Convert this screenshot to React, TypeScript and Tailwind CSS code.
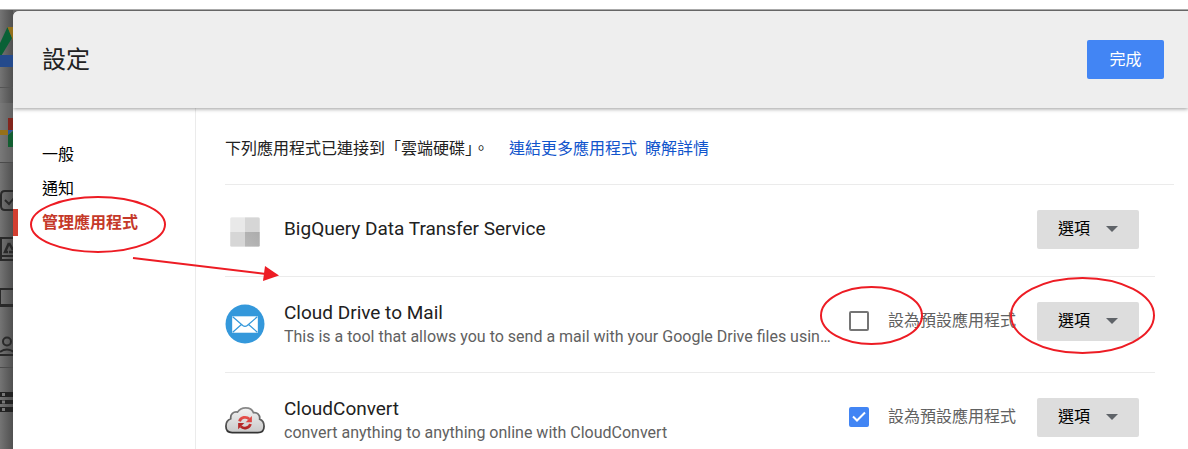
import { useState, type ReactNode } from "react";

const navItems = ["一般", "通知", "管理應用程式"];

function BigQueryIcon() {
  return (
    <svg viewBox="0 0 39 39" className="size-10" aria-hidden="true">
      <defs>
        <clipPath id="tile">
          <rect x="5" y="5" width="29" height="29" rx="1.5" />
        </clipPath>
        <linearGradient id="darkTile" x1="0" y1="1" x2="1" y2="0">
          <stop offset="0" stopColor="#b8b8b8" />
          <stop offset="1" stopColor="#acacac" />
        </linearGradient>
      </defs>
      <g clipPath="url(#tile)">
        <rect x="5" y="5" width="14.5" height="14.5" fill="#e9e9e9" />
        <rect x="19.5" y="5" width="14.5" height="14.5" fill="#d6d6d6" />
        <rect x="5" y="19.5" width="14.5" height="14.5" fill="#d6d6d6" />
        <rect x="19.5" y="19.5" width="14.5" height="14.5" fill="url(#darkTile)" />
      </g>
    </svg>
  );
}

function MailIcon() {
  return (
    <svg viewBox="0 0 39 39" className="size-10" aria-hidden="true">
      <circle cx="19.5" cy="19.5" r="19" fill="#3498db" />
      <rect x="7" y="12" width="25" height="16" fill="#fff" />
      <path d="M7.5 12.5 L17.3 21 Q19.5 22.8 21.7 21 L31.5 12.5 M7.5 27.5 L16 20 M31.5 27.5 L23 20" fill="none" stroke="#3498db" strokeWidth="1.2" />
    </svg>
  );
}

function CloudIcon() {
  return (
    <svg viewBox="0 0 39 39" className="size-10" aria-hidden="true">
      <defs>
        <linearGradient id="cloudFill" x1="0" y1="0" x2="0" y2="1">
          <stop offset="0" stopColor="#f2f2f2" />
          <stop offset="1" stopColor="#c9c9c9" />
        </linearGradient>
        <linearGradient id="cloudEdge" x1="0" y1="0" x2="0" y2="1">
          <stop offset="0" stopColor="#8a8a8a" />
          <stop offset="1" stopColor="#333333" />
        </linearGradient>
        <linearGradient id="arrowRed" gradientUnits="userSpaceOnUse" x1="0" y1="15" x2="0" y2="29">
          <stop offset="0" stopColor="#ee5550" />
          <stop offset="1" stopColor="#a81f1f" />
        </linearGradient>
      </defs>
      <path
        d="M7 31.800 C3 31.800 .9 29.500 .9 25.500 C.9 21.700 3 19.300 5.600 18.300 C5 14 8.300 11 12.200 11.800 C14 8.800 17 7.600 20.200 7.600 C24 7.600 26.600 9.200 27.800 12.400 C31.500 11.800 34.300 14.400 33.800 18.600 C36.700 19.800 38.100 22.300 38.100 25.500 C38.100 29.500 36 31.800 32 31.800 Z"
        fill="url(#cloudFill)"
        stroke="url(#cloudEdge)"
        strokeWidth="1.7"
      />
      <g fill="none" stroke="url(#arrowRed)" strokeWidth="2.7">
        <path d="M14.200 20.800 C15.200 16.700 20.800 15.600 23.600 18.500" />
        <path d="M24.800 23.400 C23.800 27.500 18.200 28.600 15.400 25.700" />
      </g>
      <path d="M26.200 15.600 V21.700 H20.200 Z" fill="#df4642" />
      <path d="M12.800 28.600 V22.500 H18.800 Z" fill="#b52828" />
    </svg>
  );
}

function BackgroundStrip() {
  return (
    <div className="w-[13px] shrink-0 bg-linear-to-r from-[#747474] to-[#505050]">
      <svg width="13" height="439" viewBox="0 10 13 439" aria-hidden="true">
        <path d="M7.500 27 L12 38 L0 58 V43 Z" fill="#096136" />
        <path d="M7.500 27 H13 V41 L12 38 Z" fill="#94711b" />
        <path d="M0 55 H13 V67 H0 Z" fill="#244a8c" />
        <path d="M0 87.500 H13" stroke="#555" />
        <rect y="103" width="13" height="59" fill="#808080" opacity=".35" />
        <path d="M0 162.500 H13" stroke="#4b4b4b" />
        <path d="M8 118 H13 V130 H8 Z" fill="#82251d" />
        <path d="M0 130 H8 V135 H0 Z" fill="#967019" />
        <path d="M8 135 V130 H13 Z" fill="#29569b" />
        <path d="M8 135 L13 131 V147 H8 Z" fill="#135e31" />
        <g fill="none" stroke="#292929" strokeWidth="2">
          <path d="M14 191 H5 Q1 191 1 195 V206 Q1 210 5 210 H14 M5 200 L9 204 L14 198" />
          <path d="M0 238 H13 M1 238 V260 M0 256 H13 M0 260 H13" />
          <path d="M9 243 L5 252 H8 M9 243 L13 250 M9 252 H13" strokeWidth="2.5" />
          <path d="M0 289 H13 M0 289 V305" />
          <path d="M0 305.500 H13" strokeWidth="3" />
          <circle cx="7" cy="341.500" r="4" />
          <path d="M0 352 Q7 347 14 352 M0 355 H13" />
        </g>
        <path d="M0 367.500 H13" stroke="#4b4b4b" />
        <path d="M0 392 H13 V397 H0 Z M0 400 H13 V404 H0 Z M0 407 H13 V412 H0 Z" fill="#222" />
        <path d="M2 393 H5 V396 H2 Z M2 400.500 H5 V403.500 H2 Z M2 408 H5 V411 H2 Z" fill="#777" />
      </svg>
    </div>
  );
}

function DefaultToggle({ initial }: { initial: boolean }) {
  const [checked, setChecked] = useState(initial);
  return (
    <label className="flex shrink-0 items-center gap-[19px] text-base text-[#616161]">
      <span className="grid size-5 place-items-center">
        <input
          type="checkbox"
          checked={checked}
          onChange={(e) => setChecked(e.target.checked)}
          className="col-start-1 row-start-1 size-5 appearance-none rounded-xs border-2 border-[#757575] bg-white checked:border-[#4285f4] checked:bg-[#4285f4]"
        />
        {checked && (
          <svg viewBox="0 0 20 20" className="pointer-events-none col-start-1 row-start-1 size-5" aria-hidden="true">
            <path d="M4 9.500 L8 13.500 L16 5.500" fill="none" stroke="#fff" strokeWidth="2" />
          </svg>
        )}
      </span>
      設為預設應用程式
    </label>
  );
}

function AppRow({ icon, name, description, isDefault }: { icon: ReactNode; name: string; description?: string; isDefault?: boolean }) {
  return (
    <li className="mr-[33px] flex items-start border-b border-[#ebebeb] pt-6 pr-4 pb-6">
      <div className="mt-[3px] shrink-0">{icon}</div>
      <div className="ml-[19px] min-w-0 flex-1">
        <h2 className={description ? "text-[19px] leading-6 text-[#212121]" : "text-[19px] leading-10 text-[#212121]"}>{name}</h2>
        {description && <p className="truncate text-base leading-[23px] text-[#616161]">{description}</p>}
      </div>
      <div className="ml-4 flex h-10 shrink-0 items-center gap-[21px]">
        {isDefault !== undefined && <DefaultToggle initial={isDefault} />}
        <button type="button" className="flex h-[39px] items-center gap-4 rounded-xs bg-[#dddddd] px-[21px] text-base text-black">
          選項
          <svg viewBox="0 0 12 6" className="h-[6px] w-3" aria-hidden="true">
            <path d="M0 0 H12 L6 6 Z" fill="#5f6368" />
          </svg>
        </button>
      </div>
    </li>
  );
}

function Annotations() {
  return (
    <svg className="pointer-events-none absolute top-0 left-0" width="1188" height="449" viewBox="0 0 1188 449" aria-hidden="true">
      <g fill="none" stroke="#ed1c24" strokeWidth="2">
        <ellipse cx="98" cy="224.500" rx="67" ry="27.500" />
        <ellipse cx="871.500" cy="315.500" rx="50.500" ry="28.500" />
        <ellipse cx="1082.500" cy="315.500" rx="71.500" ry="37.500" />
        <path d="M133 258 L266 274" />
      </g>
      <path d="M265 266 L279 275.500 L263 281 Z" fill="#ed1c24" />
    </svg>
  );
}

export default function App() {
  return (
    <div className="relative flex h-screen flex-col overflow-hidden bg-white pt-[9px] font-['Roboto','Noto_Sans_CJK_TC',sans-serif]">
      <div className="flex min-h-0 flex-1 border-t border-[#aaaaaa] bg-[#666666]">
        <BackgroundStrip />
        <div className="mt-px flex min-w-0 flex-1 flex-col overflow-hidden rounded-tl-md bg-white">
          <header className="z-10 flex h-[97px] shrink-0 items-center justify-between bg-[#eeeeee] pr-6 pl-[29px] shadow-[0_1px_4px_#00000066]">
            <h1 className="text-2xl text-[#212121]">設定</h1>
            <button type="button" className="h-[39px] w-[77px] rounded-xs bg-[#4285f4] text-base text-white">完成</button>
          </header>
          <div className="flex min-h-0 flex-1">
            <nav className="flex w-[183px] shrink-0 flex-col gap-[7px] border-r border-[#ebebeb] pt-[33px]">
              {navItems.map((item, i) => (
                <a
                  key={item}
                  href="#"
                  aria-current={i === 2 ? "page" : undefined}
                  className={
                    i === 2
                      ? "border-l-5 border-[#d23f31] pl-6 text-base leading-[27px] font-bold text-[#c53929]"
                      : "border-l-5 border-transparent pl-6 text-base leading-[27px] text-black"
                  }
                >
                  {item}
                </a>
              ))}
            </nav>
            <main className="min-w-0 flex-1 pl-[29px]">
              <div className="mr-3.5 flex border-b border-[#ebebeb] pt-[29px] pb-[23px] text-base text-[#212121]">
                <p>下列應用程式已連接到「雲端硬碟」。</p>
                <a href="#" className="ml-5 text-[#1155cc]">連結更多應用程式</a>
                <a href="#" className="ml-2 text-[#1155cc]">瞭解詳情</a>
              </div>
              <ul>
                <AppRow icon={<BigQueryIcon />} name="BigQuery Data Transfer Service" />
                <AppRow
                  icon={<MailIcon />}
                  name="Cloud Drive to Mail"
                  description="This is a tool that allows you to send a mail with your Google Drive files usin…"
                  isDefault={false}
                />
                <AppRow icon={<CloudIcon />} name="CloudConvert" description="convert anything to anything online with CloudConvert" isDefault={true} />
              </ul>
            </main>
          </div>
        </div>
      </div>
      <Annotations />
    </div>
  );
}
